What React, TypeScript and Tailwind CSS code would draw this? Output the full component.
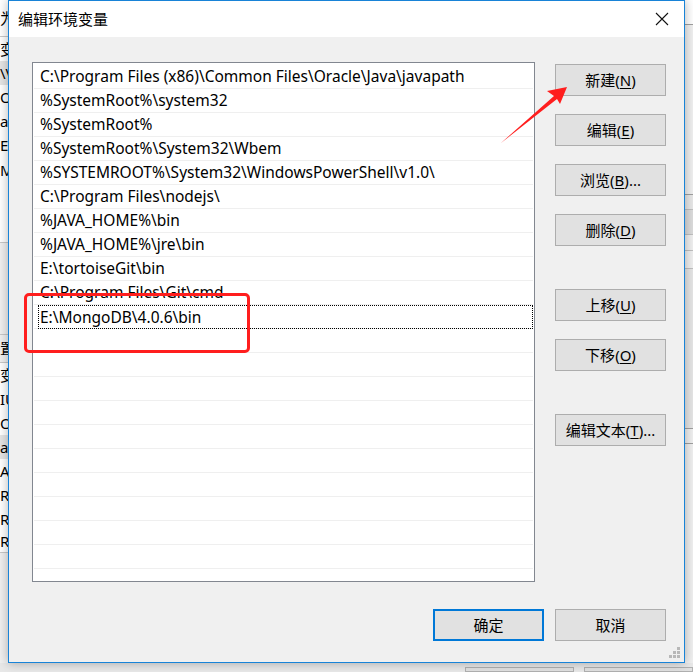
import React from 'react';

const paths = [
  'C:\\Program Files (x86)\\Common Files\\Oracle\\Java\\javapath',
  '%SystemRoot%\\system32',
  '%SystemRoot%',
  '%SystemRoot%\\System32\\Wbem',
  '%SYSTEMROOT%\\System32\\WindowsPowerShell\\v1.0\\',
  'C:\\Program Files\\nodejs\\',
  '%JAVA_HOME%\\bin',
  '%JAVA_HOME%\\jre\\bin',
  'E:\\tortoiseGit\\bin',
  'C:\\Program Files\\Git\\cmd',
  'E:\\MongoDB\\4.0.6\\bin',
];

const FOCUSED = 10;
const ROWS = 22;

// fragments of the window behind the dialog, left edge
const leftBits: { t: string; h: number; bg?: string; line?: boolean }[] = [
  { t: '为', h: 37, bg: 'bg-white', line: true },
  { t: '变', h: 24, bg: 'bg-white' },
  { t: '\\V', h: 24, bg: 'bg-[#e5e5e5]' },
  { t: 'Or', h: 24, bg: 'bg-white' },
  { t: 'a', h: 24, bg: 'bg-white' },
  { t: 'E', h: 25, bg: 'bg-white' },
  { t: 'M', h: 25, bg: 'bg-white' },
  { t: '', h: 60, bg: 'bg-white', line: true },
  { t: '', h: 92, bg: 'bg-[#f0f0f0]', line: true },
  { t: '置', h: 28, bg: 'bg-[#f0f0f0]', line: true },
  { t: '变', h: 24, bg: 'bg-white' },
  { t: 'IU', h: 24, bg: 'bg-white' },
  { t: 'OS', h: 24, bg: 'bg-white' },
  { t: 'a', h: 24, bg: 'bg-[#e5e5e5]' },
  { t: 'A', h: 24, bg: 'bg-white' },
  { t: 'R', h: 24, bg: 'bg-white' },
  { t: 'R', h: 24, bg: 'bg-white' },
  { t: 'R', h: 22, bg: 'bg-white', line: true },
];

function Btn({
  label,
  mn,
  suffix = '',
  primary = false,
}: {
  label: string;
  mn?: string;
  suffix?: string;
  primary?: boolean;
}) {
  return (
    <div
      className={`w-[111px] h-[32px] flex items-center justify-center bg-[#e1e1e1] text-[15px] text-black ${
        primary ? 'border-2 border-[#0078d7]' : 'border border-[#adadad]'
      }`}
    >
      <span>
        {label}
        {mn && (
          <>
            (<span className="underline underline-offset-2">{mn}</span>)
          </>
        )}
        {suffix}
      </span>
    </div>
  );
}

export default function App() {
  return (
    <div className="relative w-[693px] h-[672px] overflow-hidden bg-[#f0f0f0] font-['Noto_Sans','Noto_Sans_CJK_SC',sans-serif] text-black">
      {/* window behind */}
      <div className="flex h-[663px]">
        <div className="w-[8px] flex flex-col overflow-hidden">
          {leftBits.map((b, i) => (
            <div
              key={i}
              style={{ height: b.h }}
              className={`${b.bg ?? ''} ${b.line ? 'border-b border-[#c8c8c8]' : ''} flex items-center whitespace-nowrap text-[15px] leading-none shrink-0`}
            >
              {b.t}
            </div>
          ))}
        </div>
        <div className="flex-1" />
        <div className="w-[8px] flex flex-col">
          <div className="h-[25px] bg-white border-b border-[#a0a0a0]" />
          <div className="h-[170px] bg-[#f0f0f0] border-b border-[#a0a0a0]" />
          <div className="h-[15px] bg-[#e8e8e8] border-b border-[#c0c0c0]" />
          <div className="h-[25px] bg-[#dcdcdc] border-b border-[#c0c0c0]" />
          <div className="h-[16px] bg-[#f0f0f0] border-b border-[#c0c0c0]" />
          <div className="h-[18px] bg-[#f0f0f0] border-b border-[#c0c0c0]" />
          <div className="h-[160px] bg-[#e6e6e6] border-b border-[#a0a0a0]" />
          <div className="h-[15px] bg-[#f0f0f0] border-b border-[#a0a0a0]" />
          <div className="flex-1 bg-[#f0f0f0]" />
        </div>
      </div>
      <div className="h-[9px] bg-[#e8e8e8] flex">
        <div className="w-[472px]" />
        <div className="w-[111px] mt-[4px] border border-[#b0b0b0] bg-[#e1e1e1]" />
        <div className="w-[10px]" />
        <div className="w-[111px] mt-[4px] border border-[#b0b0b0] bg-[#e1e1e1]" />
      </div>

      {/* the dialog window */}
      <div className="absolute left-[8px] top-0 w-[677px] h-[663px] border border-[#1883d7] bg-[#f0f0f0] flex flex-col shadow-[0_0_10px_rgba(0,0,0,0.3)]">
        <div className="h-[36px] bg-white flex items-center">
          <div className="pl-[9px] text-[15px] flex-1">编辑环境变量</div>
          <div className="w-[44px] h-full flex items-center justify-center">
            <svg width="14" height="14" viewBox="0 0 14 14">
              <path d="M1 1 L13 13 M13 1 L1 13" stroke="#111" strokeWidth="1.1" fill="none" />
            </svg>
          </div>
        </div>

        <div className="flex-1 flex flex-col pt-[25px] pl-[23px] pr-[18px] pb-[21px]">
          <div className="flex">
            <div className="w-[503px] h-[520px] border border-[#828790] bg-white overflow-hidden pt-[2px] px-px">
              {Array.from({ length: ROWS }).map((_, i) => (
                <div key={i} className="h-[24px] border-b border-[#efefef] flex">
                  <div
                    className={`flex-1 ml-[4px] flex items-center pl-[1px] pt-[1px] text-[15.5px] whitespace-nowrap ${
                      i === FOCUSED ? 'border border-dotted border-black h-[24px]' : 'border border-transparent'
                    }`}
                  >
                    {paths[i] ?? ''}
                  </div>
                </div>
              ))}
            </div>
            <div className="ml-[20px] mt-[2px] flex flex-col gap-[18px]">
              <Btn label="新建" mn="N" />
              <Btn label="编辑" mn="E" />
              <Btn label="浏览" mn="B" suffix="..." />
              <Btn label="删除" mn="D" />
              <div className="mt-[25px]">
                <Btn label="上移" mn="U" />
              </div>
              <Btn label="下移" mn="O" />
              <div className="mt-[25px]">
                <Btn label="编辑文本" mn="T" suffix="..." />
              </div>
            </div>
          </div>
          <div className="mt-[27px] flex justify-end gap-[11px]">
            <Btn label="确定" primary />
            <Btn label="取消" />
          </div>
        </div>

        {/* size grip */}
        <svg className="absolute right-[3px] bottom-[3px]" width="12" height="12" viewBox="0 0 12 12">
          {[
            [8, 0],
            [4, 4],
            [8, 4],
            [0, 8],
            [4, 8],
            [8, 8],
          ].map(([x, y], i) => (
            <rect key={i} x={x} y={y} width="3" height="3" fill="#b8b8b8" />
          ))}
        </svg>
      </div>

      {/* red annotations */}
      <div className="absolute left-[24px] top-[293px] w-[226px] h-[60px] border-[3px] border-[#ff1e1e] rounded-[5px]" />
      <svg className="absolute left-0 top-0 pointer-events-none" width="693" height="672">
        <polygon
          points="501,143 554,96 547,91 567,87 560,104 557,99"
          fill="#ff1e1e"
        />
      </svg>
    </div>
  );
}
